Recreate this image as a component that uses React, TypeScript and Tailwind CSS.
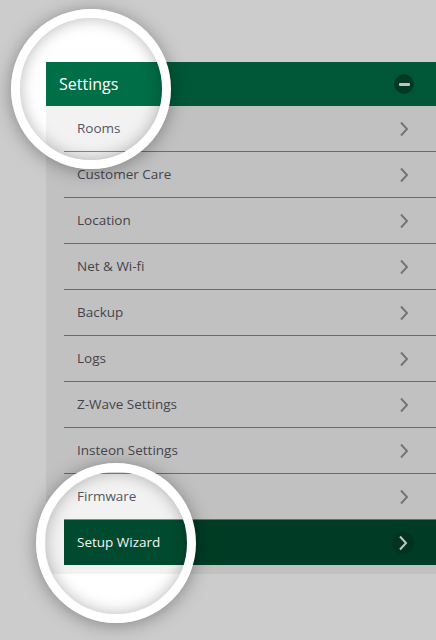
import React from "react";

const ITEMS = [
  "Rooms",
  "Customer Care",
  "Location",
  "Net & Wi-fi",
  "Backup",
  "Logs",
  "Z-Wave Settings",
  "Insteon Settings",
  "Firmware",
];

// spotlight rings: centre + outer radius
const SPOTS = [
  { cx: 91, cy: 89 },
  { cx: 116, cy: 543 },
];
const OUTER = 80;
const INNER = 71;

function Chevron({ light }: { light?: boolean }) {
  return (
    <svg width="20" height="20" viewBox="0 0 20 20" className="shrink-0">
      <polyline
        points="7,3.5 13,10 7,16.5"
        fill="none"
        stroke={light ? "#f4f4f4" : "#949494"}
        strokeWidth="2"
      />
    </svg>
  );
}

function holePath() {
  let d = "M0 0H436V640H0Z";
  for (const { cx, cy } of SPOTS) {
    d += ` M${cx - INNER} ${cy} a${INNER} ${INNER} 0 1 0 ${INNER * 2} 0 a${INNER} ${INNER} 0 1 0 ${-INNER * 2} 0Z`;
  }
  return d;
}

export default function App() {
  return (
    <div
      className="relative h-[640px] w-full overflow-hidden bg-white pt-[62px] pl-[46px]"
      style={{ fontFamily: '"Open Sans", "Noto Sans", sans-serif' }}
    >
      <div className="bg-[#f2f2f2] pb-[9px]">
        {/* header */}
        <div className="flex h-[44px] items-center justify-between bg-[#006e47] pl-[13px] pr-[22px]">
          <span className="text-[16px] text-white">Settings</span>
          <span className="flex h-[20px] w-[20px] items-center justify-center rounded-full bg-[#00492e]">
            <span className="h-[3px] w-[11px] rounded-[1px] bg-[#f2f2f2]" />
          </span>
        </div>

        {/* rows */}
        <div className="ml-[18px]">
          {ITEMS.map((label) => (
            <div
              key={label}
              className="flex h-[46px] items-center justify-between border-b border-[#878787] pl-[13px] pr-[22px]"
            >
              <span className="text-[13.5px] text-[#56565f]">{label}</span>
              <Chevron />
            </div>
          ))}
          <div className="flex h-[45px] items-center justify-between bg-[#004b2f] pl-[13px] pr-[22px]">
            <span className="text-[13.5px] text-[#f4f4f4]">Setup Wizard</span>
            <span className="flex h-[22px] w-[22px] items-center justify-center rounded-full bg-[#004128]">
              <Chevron light />
            </span>
          </div>
        </div>
      </div>

      {/* dim overlay with spotlight holes */}
      <svg
        className="pointer-events-none absolute left-0 top-0"
        width="436"
        height="640"
        viewBox="0 0 436 640"
      >
        <path d={holePath()} fill="rgba(0,0,0,0.2)" fillRule="evenodd" />
      </svg>

      {SPOTS.map(({ cx, cy }) => (
        <div
          key={cx}
          className="pointer-events-none absolute h-[160px] w-[160px] rounded-full border-[9px] border-white shadow-[0_2px_18px_rgba(0,0,0,0.35),inset_0_0_16px_rgba(0,0,0,0.28)]"
          style={{ left: cx - OUTER, top: cy - OUTER }}
        />
      ))}
    </div>
  );
}
